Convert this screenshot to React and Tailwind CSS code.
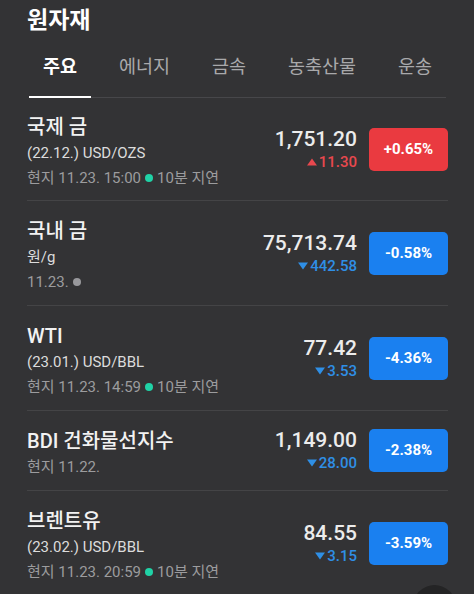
import React, { useState } from 'react';

const tabs = ['주요', '에너지', '금속', '농축산물', '운송'];

const items = [
  { name: '국제 금', sub: '(22.12.) USD/OZS', meta: '현지 11.23. 15:00', live: true, price: '1,751.20', change: '11.30', rate: '+0.65%', up: true },
  { name: '국내 금', sub: '원/g', meta: '11.23.', live: false, price: '75,713.74', change: '442.58', rate: '-0.58%', up: false },
  { name: 'WTI', sub: '(23.01.) USD/BBL', meta: '현지 11.23. 14:59', live: true, price: '77.42', change: '3.53', rate: '-4.36%', up: false },
  { name: 'BDI 건화물선지수', meta: '현지 11.22.', price: '1,149.00', change: '28.00', rate: '-2.38%', up: false },
  { name: '브렌트유', sub: '(23.02.) USD/BBL', meta: '현지 11.23. 20:59', live: true, price: '84.55', change: '3.15', rate: '-3.59%', up: false },
];

const Triangle = ({ up }) => (
  <svg width="10" height="8" viewBox="0 0 10 8" className="mr-[2px]">
    {up ? <path d="M5 0.5 L10 7.5 L0 7.5 Z" fill="currentColor" /> : <path d="M0 0.5 L10 0.5 L5 7.5 Z" fill="currentColor" />}
  </svg>
);

const Row = ({ item, first }) => {
  const height = !item.sub ? 'h-[80px]' : first ? 'h-[103px]' : 'h-[105px]';
  return (
    <div className={`flex items-center border-b border-[#444446] ${height}`}>
      <div className="flex-1 min-w-0 pt-[6px]">
        <div className="text-[20px] leading-[27px] font-medium text-[#f2f2f2]">{item.name}</div>
        {item.sub && <div className="text-[15px] leading-[25px] text-[#dcdcdc]">{item.sub}</div>}
        <div className="flex items-center text-[15px] leading-[25px] text-[#9c9c9e]">
          <span>{item.meta}</span>
          {item.live === true && (
            <>
              <span className="ml-[4px] mr-[4px] inline-block h-[8px] w-[8px] rounded-full bg-[#20d2a6]" />
              <span>10분 지연</span>
            </>
          )}
          {item.live === false && <span className="ml-[4px] inline-block h-[8px] w-[8px] rounded-full bg-[#98989c]" />}
        </div>
      </div>
      <div className="flex flex-col items-end mr-[12px]">
        <div className="text-[21px] leading-[25px] font-medium text-[#ececec]">{item.price}</div>
        <div className={`flex items-center text-[15px] leading-[20px] font-medium ${item.up ? 'text-[#e8484e]' : 'text-[#2f8fe6]'}`}>
          <Triangle up={item.up} />
          {item.change}
        </div>
      </div>
      <div className={`flex h-[43px] w-[79px] items-center justify-center rounded-[5px] text-[15px] font-bold text-white ${item.up ? 'bg-[#ea3a40]' : 'bg-[#1a80f0]'}`}>
        {item.rate}
      </div>
    </div>
  );
};

export default function App() {
  const [active, setActive] = useState(0);

  return (
    <div className="relative h-[594px] w-[474px] overflow-hidden bg-[#333335] pl-[27px] pr-[26px] font-['Roboto','Noto_Sans_CJK_KR',sans-serif]">
      <div className="pt-[6px] text-[23px] leading-[30px] font-bold text-white">원자재</div>
      <div className="ml-[2px] mr-[2px] mt-[4px] flex justify-between shadow-[inset_0_-1px_0_#47474a]">
        {tabs.map((tab, idx) => (
          <button
            key={tab}
            onClick={() => setActive(idx)}
            className={`h-[58px] border-b-2 px-[14px] text-[18.5px] ${
              active === idx ? 'border-white font-bold text-white' : 'border-transparent text-[#a9a9ab]'
            }`}
          >
            {tab}
          </button>
        ))}
      </div>
      {items.map((item, idx) => (
        <Row key={item.name} item={item} first={idx === 0} />
      ))}
      <div className="absolute left-[413px] top-[585px] h-[43px] w-[43px] rounded-full bg-[#242425]" />
    </div>
  );
}
